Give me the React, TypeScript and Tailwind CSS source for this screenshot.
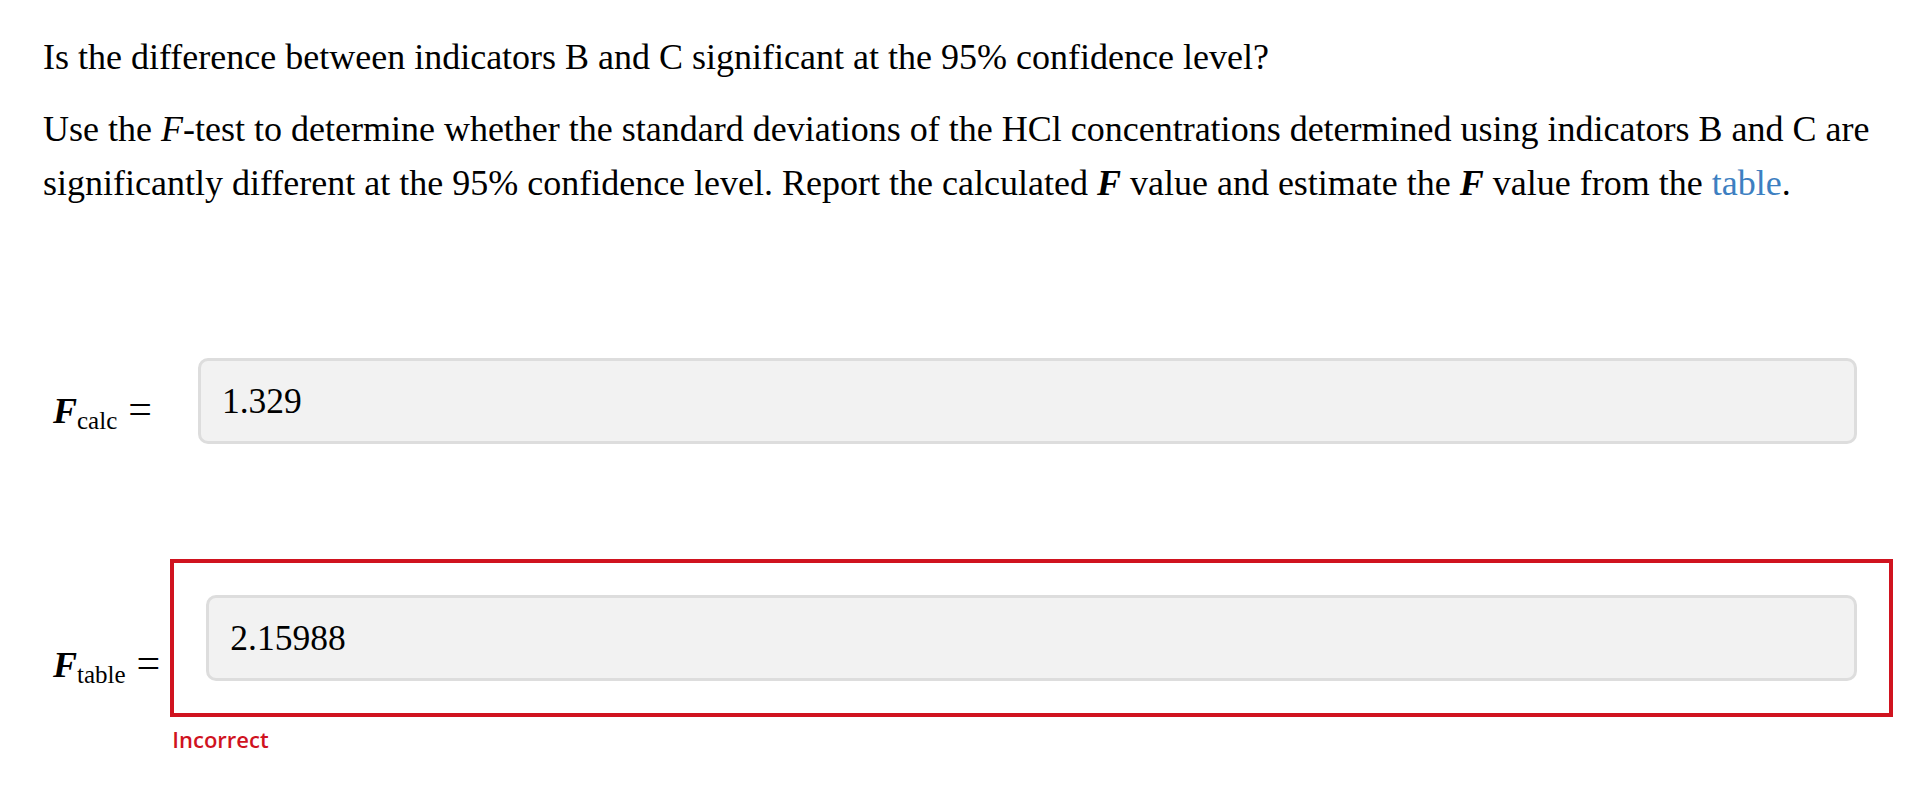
import React from 'react';

function MathLabel({ sub, className }: { sub: string; className?: string }) {
  return (
    <div className={`flex shrink-0 items-baseline whitespace-nowrap leading-[54px] ${className ?? ''}`}>
      <span className="font-bold italic">F</span>
      <span className="relative top-[6px] text-[25px] leading-none">{sub}</span>
      <span className="ml-[11px] mr-[10px] text-[42px] leading-none">=</span>
    </div>
  );
}

function AnswerBox({ value, incorrect }: { value: string; incorrect?: boolean }) {
  return (
    <div className="flex flex-1 flex-col">
      <div className={`border-4 p-[32px] ${incorrect ? 'border-[#d0131f]' : 'border-transparent'}`}>
        <div className="flex h-[86px] items-center rounded-[10px] border-[3px] border-[#dddddd] bg-[#f2f2f2] pl-[21px] text-[35.5px] text-black">
          {value}
        </div>
      </div>
      {incorrect && (
        <div className="mt-[8px] pl-[2px] font-['Open_Sans',sans-serif] text-[22px] font-semibold leading-[28px] text-[#d0131f]">
          Incorrect
        </div>
      )}
    </div>
  );
}

export default function App() {
  return (
    <div className="min-h-screen bg-white pl-[43px] pr-[12px] pt-[30px] font-['Liberation_Serif','Times_New_Roman',serif] text-[36px] leading-[54px] text-black">
      <p className="mb-[18px]">Is the difference between indicators B and C significant at the 95% confidence level?</p>
      <p>
        Use the <span className="italic">F</span>-test to determine whether the standard deviations of the HCl
        concentrations determined using indicators B and C are significantly different at the 95% confidence
        level. Report the calculated <span className="font-bold italic">F</span> value and estimate the{' '}
        <span className="font-bold italic">F</span> value from the <a className="text-[#3d7fc1]">table</a>.
      </p>

      <div className="mt-[112px] flex items-start pl-[10px]">
        <MathLabel sub="calc" className="mt-[62px]" />
        <AnswerBox value="1.329" />
      </div>

      <div className="mt-[79px] flex items-start pl-[10px]">
        <MathLabel sub="table" className="mt-[79px]" />
        <AnswerBox value="2.15988" incorrect />
      </div>
    </div>
  );
}
